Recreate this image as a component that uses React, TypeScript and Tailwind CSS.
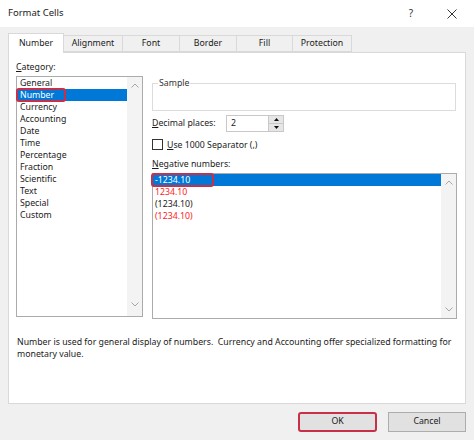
import React from "react";

function ChevUp() {
  return (
    <svg width="8" height="5" viewBox="0 0 8 5">
      <path d="M0.5 4.5L4 1L7.5 4.5" fill="none" stroke="#a6a6a6" strokeWidth="1" />
    </svg>
  );
}
function ChevDown() {
  return (
    <svg width="8" height="5" viewBox="0 0 8 5">
      <path d="M0.5 0.5L4 4L7.5 0.5" fill="none" stroke="#a6a6a6" strokeWidth="1" />
    </svg>
  );
}

export default function App() {
  const cats = [
    "General",
    "Number",
    "Currency",
    "Accounting",
    "Date",
    "Time",
    "Percentage",
    "Fraction",
    "Scientific",
    "Text",
    "Special",
    "Custom",
  ];
  const tabs = [
    { name: "Alignment", w: "w-[59px]" },
    { name: "Font", w: "w-[57px]" },
    { name: "Border", w: "w-[57px]" },
    { name: "Fill", w: "w-[56px]" },
    { name: "Protection", w: "w-[59px]" },
  ];
  return (
    <div className="w-[474px] h-[440px] bg-[#f0f0f0] flex flex-col font-['Noto_Sans',sans-serif] text-[8.75px] text-[#1a1a1a] overflow-hidden">
      {/* Title bar */}
      <div className="h-[27px] shrink-0 bg-white flex items-center pl-[8px] pr-[17px]">
        <span className="text-[9.5px] flex-1 text-[#222]">Format Cells</span>
        <span className="text-[10px] text-[#333] mr-[34px]">?</span>
        <svg width="10" height="10" viewBox="0 0 10 10">
          <path d="M0.5 0.5L9.5 9.5M9.5 0.5L0.5 9.5" stroke="#333" strokeWidth="1" />
        </svg>
      </div>

      <div className="flex-1 flex flex-col px-[8px]">
        {/* Tabs */}
        <div className="h-[26px] pt-[6px] flex items-end -mb-px relative z-10">
          <div className="w-[56px] h-[20px] bg-white border border-b-0 border-[#d9d9d9] flex items-center justify-center">
            Number
          </div>
          {tabs.map((t) => (
            <div
              key={t.name}
              className={`${t.w} h-[17px] border-t border-r border-b border-[#d9d9d9] bg-[#f0f0f0] flex items-center justify-center mb-px pt-[1px]`}
            >
              {t.name}
            </div>
          ))}
        </div>

        {/* Panel */}
        <div className="h-[352px] bg-white border border-[#d9d9d9] flex flex-col">
          <div className="flex">
            {/* Left column */}
            <div className="ml-[7px] w-[127px] pt-[8px] flex flex-col">
              <div className="leading-[12px] h-[12px]">
                <span className="underline">C</span>ategory:
              </div>
              <div className="mt-[3px] h-[241px] border border-[#ababab] flex">
                <div className="flex-1 flex flex-col">
                  {cats.map((c) => (
                    <div
                      key={c}
                      className={`relative h-[12px] leading-[12px] pl-[3px] ${
                        c === "Number" ? "bg-[#0078d7] text-white" : ""
                      }`}
                    >
                      {c}
                      {c === "Number" && (
                        <div className="absolute left-[-1px] top-[-1px] w-[50px] h-[14px] border-2 border-[#c8304a] rounded-[3px]" />
                      )}
                    </div>
                  ))}
                </div>
                <div className="w-[15px] bg-[#f3f3f3] flex flex-col items-center justify-between pt-[6px] pb-[9px]">
                  <ChevUp />
                  <ChevDown />
                </div>
              </div>
            </div>

            {/* Right column */}
            <div className="ml-[9px] w-[305px] pt-[24px] flex flex-col">
              <fieldset className="w-[304px] h-[34px] border border-[#dcdcdc] px-[5px]">
                <legend className="px-[1px] leading-[12px] text-[#333]">Sample</legend>
              </fieldset>

              <div className="mt-[4px] h-[17px] flex items-center">
                <div className="w-[74px]">
                  <span className="underline">D</span>ecimal places:
                </div>
                <div className="w-[43px] h-[17px] border border-[#c8c8c8] flex items-center pl-[4px]">2</div>
                <div className="w-[15px] h-[17px] border border-l-0 border-[#c8c8c8] flex flex-col">
                  <div className="flex-1 bg-[#e6e6e6] border-b border-[#c8c8c8] flex items-center justify-center">
                    <svg width="5" height="3" viewBox="0 0 5 3">
                      <path d="M0 3L2.5 0L5 3Z" fill="#111" />
                    </svg>
                  </div>
                  <div className="flex-1 bg-[#e6e6e6] flex items-center justify-center">
                    <svg width="5" height="3" viewBox="0 0 5 3">
                      <path d="M0 0L2.5 3L5 0Z" fill="#111" />
                    </svg>
                  </div>
                </div>
              </div>

              <div className="mt-[7px] h-[11px] flex items-center">
                <div className="w-[11px] h-[11px] border border-[#333] bg-white" />
                <div className="ml-[4px] leading-[12px]">
                  <span className="underline">U</span>se 1000 Separator (,)
                </div>
              </div>

              <div className="mt-[8px] leading-[12px] h-[12px]">
                <span className="underline">N</span>egative numbers:
              </div>

              <div className="mt-[3px] h-[146px] border border-[#ababab] flex">
                <div className="flex-1 flex flex-col">
                  <div className="relative h-[12px] leading-[12px] pl-[2px] bg-[#0078d7] text-white">
                    -1234.10
                    <div className="absolute left-[-2px] top-[-1px] w-[63px] h-[14px] border-2 border-[#c8304a] rounded-[3px]" />
                  </div>
                  <div className="h-[12px] leading-[12px] pl-[2px] text-[#ff1a1a]">1234.10</div>
                  <div className="h-[12px] leading-[12px] pl-[2px]">(1234.10)</div>
                  <div className="h-[12px] leading-[12px] pl-[2px] text-[#ff1a1a]">(1234.10)</div>
                </div>
                <div className="w-[15px] bg-[#f3f3f3] flex flex-col items-center justify-between pt-[6px] pb-[6px]">
                  <ChevUp />
                  <ChevDown />
                </div>
              </div>
            </div>
          </div>

          <div className="ml-[8px] mt-[17px] leading-[12px] whitespace-pre">
            {"Number is used for general display of numbers.  Currency and Accounting offer specialized formatting for"}
            <br />
            {"monetary value."}
          </div>
        </div>

        {/* Footer */}
        <div className="pt-[8px] flex justify-end gap-[11px]">
          <div className="w-[79px] h-[20px] bg-[#e1e1e1] border-2 border-[#c8304a] rounded-[3px] flex items-center justify-center">
            OK
          </div>
          <div className="w-[78px] h-[20px] bg-[#e1e1e1] border border-[#adadad] flex items-center justify-center">
            Cancel
          </div>
        </div>
      </div>
    </div>
  );
}
